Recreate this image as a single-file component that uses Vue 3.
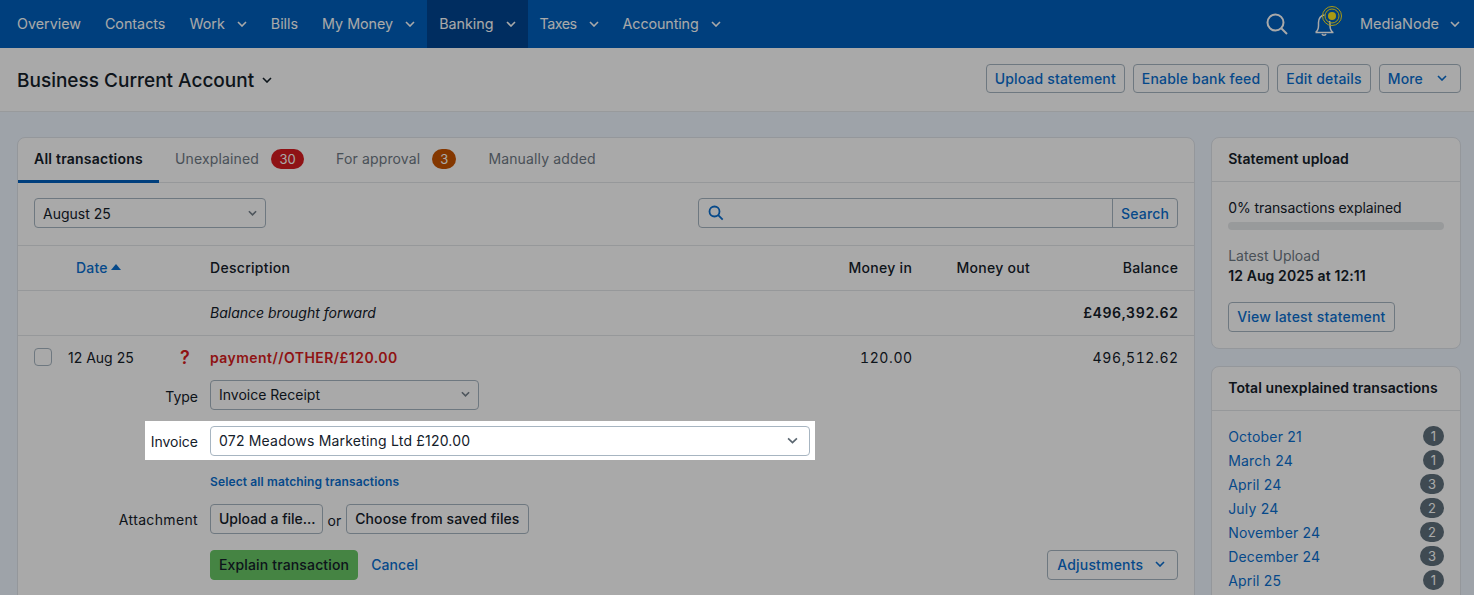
<script setup>
const navLeft = [
  { label: 'Overview' },
  { label: 'Contacts' },
  { label: 'Work', menu: true },
  { label: 'Bills' },
  { label: 'My Money', menu: true },
  { label: 'Banking', menu: true, active: true },
  { label: 'Taxes', menu: true },
  { label: 'Accounting', menu: true },
]
const months = [
  ['October 21', 1],
  ['March 24', 1],
  ['April 24', 3],
  ['July 24', 2],
  ['November 24', 2],
  ['December 24', 3],
  ['April 25', 1],
]
</script>

<template>
  <div class="page">
    <nav class="nav">
      <a v-for="n in navLeft" :key="n.label" class="nav-item" :class="{ active: n.active }">
        {{ n.label }}
        <svg v-if="n.menu" class="chev" viewBox="0 0 10 6"><path d="M1 1l4 4 4-4" /></svg>
      </a>
      <div class="nav-right">
        <svg class="search-ico" viewBox="0 0 22 22"><circle cx="9.5" cy="9.5" r="8" /><path d="M15.5 15.5l5.5 5.5" /></svg>
        <span class="bell">
          <svg viewBox="0 0 34 30" class="bell-svg">
            <path class="bell-line" d="M1.500 27.500c2-1.500 3-3.500 3-7v-3c0-4 2.500-7.500 6-7.500 M15.500 16c.3 1 .5 2 .5 3v1.500c0 3.500 1 5.500 3 7 M1.500 27.500h18 M8 29c.5 1.500 3.500 1.500 4 0" />
            <circle class="ping" cx="18" cy="11" r="4" />
            <circle class="ring" cx="18" cy="11" r="7" />
            <circle class="ring" cx="18" cy="11" r="9.500" />
          </svg>
        </span>
        <a class="nav-user">MediaNode <svg class="chev" viewBox="0 0 10 6"><path d="M1 1l4 4 4-4" /></svg></a>
      </div>
    </nav>

    <header class="subhead">
      <h1 class="title">Business Current Account <svg class="chev title-chev" viewBox="0 0 10 6"><path d="M1 1l4 4 4-4" /></svg></h1>
      <div class="actions">
        <a class="btn">Upload statement</a>
        <a class="btn">Enable bank feed</a>
        <a class="btn">Edit details</a>
        <a class="btn more">More <svg class="chev" viewBox="0 0 10 6"><path d="M1 1l4 4 4-4" /></svg></a>
      </div>
    </header>

    <div class="content">
      <main class="card main">
        <div class="tabs">
          <a class="tab current">All transactions</a>
          <a class="tab">Unexplained <span class="count red">30</span></a>
          <a class="tab">For approval <span class="count orange">3</span></a>
          <a class="tab">Manually added</a>
        </div>

        <div class="filters">
          <div class="select month">August 25 <svg class="sel-chev" viewBox="0 0 10 6"><path d="M1 1l4 4 4-4" /></svg></div>
          <div class="searchbox">
            <svg class="mini-search" viewBox="0 0 16 16"><circle cx="6.500" cy="6.500" r="5" /><path d="M10.200 10.200l4.500 4.500" /></svg>
            <span class="search-btn">Search</span>
          </div>
        </div>

        <div class="row head">
          <span class="date-col"><a class="sort">Date <i class="up"></i></a></span>
          <span>Description</span>
          <span class="num">Money in</span>
          <span class="num">Money out</span>
          <span class="num">Balance</span>
        </div>
        <div class="row forward">
          <span></span>
          <em>Balance brought forward</em>
          <span></span>
          <span></span>
          <strong class="num figure">£496,392.62</strong>
        </div>

        <div class="tx">
          <div class="row tx-row">
            <span class="tx-lead">
              <i class="check"></i>
              <span class="tx-date">12 Aug 25</span>
              <b class="qm">?</b>
            </span>
            <a class="tx-desc">payment//OTHER/£120.00</a>
            <span class="num figure">120.00</span>
            <span></span>
            <span class="num figure">496,512.62</span>
          </div>

          <div class="form-row type-row">
            <label>Type</label>
            <div class="select type">Invoice Receipt <svg class="sel-chev" viewBox="0 0 10 6"><path d="M1 1l4 4 4-4" /></svg></div>
          </div>
          <div class="form-row spotlight">
            <label>Invoice</label>
            <div class="select invoice">072 Meadows Marketing Ltd £120.00 <svg class="sel-chev big" viewBox="0 0 10 6"><path d="M1 1l4 4 4-4" /></svg></div>
          </div>
          <a class="match">Select all matching transactions</a>
          <div class="form-row attach-row">
            <label>Attachment</label>
            <a class="btn plain file-btn">Upload a file...</a>
            <span class="or">or</span>
            <a class="btn plain saved-btn">Choose from saved files</a>
          </div>
          <div class="form-row submit-row">
            <label></label>
            <a class="btn green">Explain transaction</a>
            <a class="cancel">Cancel</a>
            <a class="btn adjust">Adjustments <svg class="chev" viewBox="0 0 10 6"><path d="M1 1l4 4 4-4" /></svg></a>
          </div>
        </div>
      </main>

      <aside class="side">
        <section class="card upload">
          <h2>Statement upload</h2>
          <div class="side-body">
            <p class="explained">0% transactions explained</p>
            <div class="bar"></div>
            <p class="latest">Latest Upload</p>
            <p class="stamp">12 Aug 2025 at 12:11</p>
            <a class="btn view">View latest statement</a>
          </div>
        </section>
        <section class="card totals">
          <h2>Total unexplained transactions</h2>
          <ul class="months">
            <li v-for="m in months" :key="m[0]">
              <a>{{ m[0] }}</a><span class="pill">{{ m[1] }}</span>
            </li>
          </ul>
        </section>
      </aside>
    </div>
  </div>
</template>

<style>
html, body { margin: 0; height: 100%; overflow: hidden; }
</style>

<style scoped>
.page {
  height: 595px;
  overflow: hidden;
  background: #eef6ff;
  font-family: Inter, "Liberation Sans", sans-serif;
  font-size: 14px;
  color: #14202a;
  position: relative;
}
a { cursor: pointer; }
.chev { width: 10px; height: 6px; fill: none; stroke: currentColor; stroke-width: 1.600; flex: none; }

.nav { height: 48px; background: #005fbd; display: flex; align-items: stretch; padding-left: 5px; padding-right: 14px; }
.nav-item { display: flex; align-items: center; gap: 12px; padding: 0 12px 1px; color: #fff; font-size: 14.300px; }
.nav-item:nth-child(7) { letter-spacing: -.5px; }
.nav-item:nth-child(8) { letter-spacing: -.1px; }
.nav-item.active { background: #004591; }
.nav-right { margin-left: auto; display: flex; align-items: center; color: #fff; }
.search-ico { width: 22px; height: 22px; fill: none; stroke: #fff; stroke-width: 2; margin-right: 26px; }
.bell { display: flex; width: 34px; height: 30px; margin-right: 12px; margin-top: -8px; }
.bell-svg { width: 34px; height: 30px; fill: none; overflow: visible; }
.bell-line { stroke: #fff; stroke-width: 1.500; }
.ping { fill: #ffe81e; }
.ring { stroke: #ffe81e; stroke-width: 1; }
.nav-user { display: flex; align-items: center; gap: 11px; font-size: 14.500px; padding-bottom: 1px; }

.subhead { height: 64px; box-sizing: border-box; background: #fff; border-bottom: 1px solid #e6e8ec; display: flex; align-items: center; justify-content: space-between; padding: 0 13px 1px 17px; }
.title { margin: 0; padding-top: 2px; font-size: 19px; font-weight: 500; display: flex; align-items: center; gap: 8px; }
.title-chev { color: #14202a; }
.actions { display: flex; gap: 8px; margin-top: -2px; }
.btn { display: inline-flex; align-items: center; box-sizing: border-box; height: 29px; padding: 0 8px; border: 1px solid #a7b5c1; border-radius: 4px; background: #fff; color: #0a6fd0; font-size: 14px; font-weight: 500; letter-spacing: .17px; white-space: nowrap; }
.more { gap: 14px; }
.more .chev { margin-right: 5px; }

.content { display: flex; gap: 16px; padding: 25px 13px 0 17px; align-items: flex-start; }
.card { background: #fff; border: 1px solid #dfe4ea; border-radius: 8px; box-sizing: border-box; }
.main { width: 1179px; height: 520px; }
.side { width: 250px; display: flex; flex-direction: column; gap: 17px; }

.tabs { display: flex; height: 45px; border-bottom: 1px solid #e3e5e8; box-sizing: border-box; }
.tab { display: flex; align-items: center; gap: 12px; padding: 0 16px 2px; color: #6f7a85; font-size: 14px; letter-spacing: .15px; border-bottom: 3px solid transparent; height: 45px; box-sizing: border-box; }
.tab.current { color: #14202a; font-weight: 600; letter-spacing: .23px; border-bottom-color: #005fbd; }
.count { display: inline-flex; align-items: center; justify-content: center; height: 20px; min-width: 24px; padding: 0 4px; box-sizing: border-box; border-radius: 10px; color: #fff; font-size: 13px; letter-spacing: 0; margin-top: 2px; }
.red { background: #d81c20; min-width: 33px; }
.orange { background: #c85400; }

.filters { display: flex; justify-content: space-between; align-items: center; padding: 0 16px 2px; box-sizing: content-box; height: 60px; border-bottom: 1px solid #e3e5e8; }
.select { display: flex; align-items: center; justify-content: space-between; box-sizing: border-box; height: 30px; border: 1px solid #a7b5c1; border-radius: 4px; background: #fff; padding: 0 8px; font-size: 14px; }
.sel-chev { width: 9px; height: 6px; fill: none; stroke: #76828c; stroke-width: 1.800; }
.sel-chev.big { width: 11px; height: 7px; margin-right: 3px; stroke-width: 1.500; stroke: #5a6670; }
.month { width: 232px; }
.searchbox { width: 480px; height: 30px; box-sizing: border-box; border: 1px solid #a7b5c1; border-radius: 4px; display: flex; align-items: center; justify-content: space-between; }
.mini-search { width: 16px; height: 16px; margin-left: 9px; fill: none; stroke: #0a6fd0; stroke-width: 1.800; }
.search-btn { height: 100%; display: flex; align-items: center; border-left: 1px solid #a7b5c1; padding: 0 8px; color: #0a6fd0; font-weight: 500; letter-spacing: .2px; }

.row { display: grid; grid-template-columns: 176px 1fr 120px 118px 148px; align-items: center; padding: 0 16px 2px; height: 45px; box-sizing: border-box; border-bottom: 1px solid #e3e5e8; }
.num { text-align: right; }
.figure { font-variant-numeric: tabular-nums; letter-spacing: .6px; margin-right: -.6px; }
.head { font-weight: 500; letter-spacing: .3px; }
.date-col { padding-left: 42px; }
.sort { color: #0a6fd0; display: inline-flex; align-items: center; gap: 3px; letter-spacing: .2px; }
.up { width: 0; height: 0; border: 5px solid transparent; border-top: 0; border-bottom: 6px solid #0a6fd0; }
.forward strong { font-weight: 600; }
.tx-row { border-bottom: 0; height: 44px; }
.tx-lead { display: flex; align-items: center; }
.check { width: 18px; height: 18px; box-sizing: border-box; border: 1px solid #a7b5c1; border-radius: 4px; }
.tx-date { margin-left: 16px; width: 112px; flex: none; }
.qm { color: #d81c20; font-size: 18px; font-weight: 600; width: 10px; }
.tx-desc { color: #d81c20; font-weight: 600; letter-spacing: .45px; }

.form-row { display: flex; align-items: center; padding-left: 128px; }
.form-row label { width: 52px; flex: none; text-align: right; margin-right: 12px; white-space: nowrap; display: flex; justify-content: flex-end; padding-top: 2px; }
.type { width: 269px; padding-bottom: 2px; }
.spotlight {
  position: relative;
  z-index: 5;
  width: 670px;
  height: 39px;
  box-sizing: border-box;
  margin: 11px 0 0 127px;
  padding: 0 5px 0 5px;
  background: #fff;
  box-shadow: 0 0 0 3000px rgba(0, 0, 0, .337);
}
.spotlight label { margin-right: 12px; width: 48px; }
.invoice { width: 600px; color: #14202a; letter-spacing: .2px; }
.match { display: block; margin: 14px 0 0 192px; color: #0a6fd0; font-size: 12px; font-weight: 600; line-height: 16px; letter-spacing: .13px; }
.attach-row { padding-left: 0; margin: 14px 0 0; height: 30px; }
.form-row.attach-row label { letter-spacing: .35px; padding-top: 0; }
.attach-row label, .submit-row label { width: 180px; margin-right: 12px; box-sizing: border-box; }
.plain { color: #14202a; height: 30px; letter-spacing: 0; padding: 0 8px 2px; }
.file-btn { padding-right: 6px; }
.saved-btn { letter-spacing: .1px; }
.or { margin: 0 5px; padding-top: 2px; }
.submit-row { padding-left: 0; margin-top: 16px; padding-right: 16px; height: 30px; }
.green { background: #69c866; border-color: #69c866; color: #14202a; height: 30px; letter-spacing: .15px; padding-bottom: 2px; }
.cancel { color: #0a6fd0; font-weight: 500; margin-left: 13px; letter-spacing: .1px; padding-bottom: 2px; }
.adjust { margin-left: auto; height: 30px; gap: 12px; padding: 0 9px 2px; }
.adjust .chev { margin-right: 3px; }

.side h2 { margin: 0; height: 44px; display: flex; align-items: center; padding: 0 16px 2px; font-size: 14px; font-weight: 600; letter-spacing: .07px; border-bottom: 1px solid #e3e5e8; box-sizing: border-box; }
.upload { height: 212px; }
.side-body { padding: 16px 16px 0; }
.side-body p { margin: 0; line-height: 20px; }
.explained { letter-spacing: -.08px; }
.bar { height: 8px; background: #e6e8ea; border-radius: 4px; margin: 4px 0 0; }
.latest { margin-top: 16px !important; color: #6f7a85; }
.stamp { font-weight: 600; letter-spacing: .1px; }
.view { height: 30px; margin-top: 16px; padding-bottom: 1px; letter-spacing: .2px; }
.totals { min-height: 300px; }
.months { list-style: none; margin: 0; padding: 13px 16px 0; }
.months li { display: flex; justify-content: space-between; align-items: center; height: 24px; color: #0a6fd0; letter-spacing: .2px; }
.pill { min-width: 21px; height: 20px; padding: 0 8px; box-sizing: border-box; border-radius: 10px; background: #5f707c; color: #fff; font-size: 13px; letter-spacing: 0; display: flex; align-items: center; justify-content: center; }
</style>
